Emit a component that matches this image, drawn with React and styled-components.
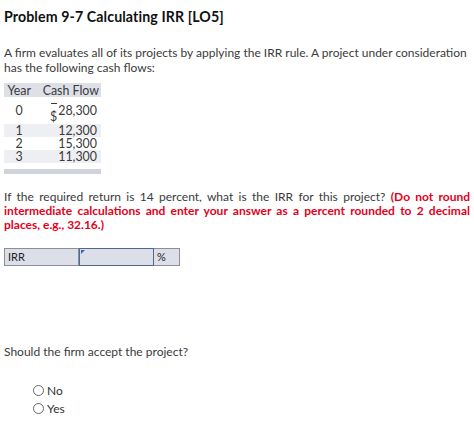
import React from "react";
import styled, { createGlobalStyle } from "styled-components";

const GlobalStyle = createGlobalStyle`
  html, body {
    margin: 0;
    padding: 0;
    background: #fff;
  }
  body {
    font-family: Lato, "Open Sans", "Liberation Sans", sans-serif;
    color: #333;
  }
`;

const Page = styled.div`
  width: 474px;
  height: 424px;
  box-sizing: border-box;
  padding: 8px 4px 0 4px;
  overflow: hidden;
`;

const Title = styled.h1`
  margin: 0;
  font-size: 14.2px;
  line-height: 18px;
  font-weight: 700;
  color: #111;
  letter-spacing: 0.1px;
`;

const Text = styled.p`
  margin: ${(p) => p.margin || "0"};
  font-size: 12px;
  line-height: ${(p) => p.lh || 14}px;
  color: #3a3a3a;
  text-align: ${(p) => (p.justify ? "justify" : "left")};
`;

const Red = styled.span`
  color: #e4001b;
  font-weight: 700;
`;

const Table = styled.table`
  margin-top: 8px;
  border-collapse: collapse;
  width: 97px;
  font-size: 12.4px;
  color: #3a3a3a;
  border-bottom: 5px solid #cfd3da;
`;

const HeadCell = styled.th`
  background: #dde0e7;
  font-weight: 400;
  padding: 0 2px;
  height: 14px;
  line-height: 13px;
  text-align: ${(p) => p.align || "center"};
`;

const Row = styled.tr`
  background: ${(p) => (p.shaded ? "#eeeff2" : "#fff")};
`;

const Cell = styled.td`
  padding: 0 4px;
  height: ${(p) => p.h || 13}px;
  line-height: 13px;
  text-align: ${(p) => p.align || "center"};
  vertical-align: middle;
`;

const Dollar = styled.span`
  position: relative;
  display: inline-block;
  top: 6px;
  margin-right: 1px;
  &::before {
    content: "";
    position: absolute;
    left: 1px;
    top: -7px;
    width: 6px;
    border-top: 1px solid #3a3a3a;
  }
`;

const Spacer = styled.tr`
  height: 8px;
`;

const AnswerRow = styled.div`
  margin-top: 16px;
  display: flex;
  height: 18px;
  font-size: 11px;
  color: #222;
`;

const Label = styled.div`
  width: ${(p) => p.w}px;
  box-sizing: border-box;
  background: #dcdfe8;
  border: 1px solid #8a8f99;
  ${(p) => (p.noLeft ? "border-left: none;" : "")}
  padding: 2px 3px;
  line-height: 12px;
`;

const Input = styled.div`
  position: relative;
  width: 75px;
  box-sizing: border-box;
  background: #dcdfe8;
  border: 1px solid #4c6a8e;
  &::before {
    content: "";
    position: absolute;
    left: 1px;
    top: 1px;
    border-top: 4px solid #2f66b0;
    border-right: 4px solid transparent;
  }
`;

const Choices = styled.div`
  margin: 25px 0 0 29px;
  display: flex;
  flex-direction: column;
  gap: 4px;
`;

const Choice = styled.label`
  display: flex;
  align-items: center;
  gap: 3px;
  font-size: 12px;
  color: #333;
  line-height: 14px;
`;

const Radio = styled.span`
  width: 9px;
  height: 9px;
  border-radius: 50%;
  border: 1px solid #666;
  background: #fff;
`;

export default function App() {
  return (
    <>
      <GlobalStyle />
      <Page>
        <Title>Problem 9-7 Calculating IRR [LO5]</Title>
        <Text margin="19px 0 0 0" lh={15}>
          A firm evaluates all of its projects by applying the IRR rule. A project under consideration
          has the following cash flows:
        </Text>
        <Table>
          <thead>
            <tr>
              <HeadCell>Year</HeadCell>
              <HeadCell align="right">Cash Flow</HeadCell>
            </tr>
          </thead>
          <tbody>
            <Row>
              <Cell h={27}>0</Cell>
              <Cell h={27} align="right">
                <Dollar>$</Dollar>28,300
              </Cell>
            </Row>
            <Row shaded>
              <Cell>1</Cell>
              <Cell align="right">12,300</Cell>
            </Row>
            <Row>
              <Cell>2</Cell>
              <Cell align="right">15,300</Cell>
            </Row>
            <Row shaded>
              <Cell>3</Cell>
              <Cell align="right">11,300</Cell>
            </Row>
            <Spacer />
          </tbody>
        </Table>
        <Text margin="16px 0 0 0" justify>
          If the required return is 14 percent, what is the IRR for this project?{" "}
          <Red>
            (Do not round intermediate calculations and enter your answer as a percent rounded to 2
            decimal places, e.g., 32.16.)
          </Red>
        </Text>
        <AnswerRow>
          <Label w={75}>IRR</Label>
          <Input />
          <Label w={26} noLeft>%</Label>
        </AnswerRow>
        <Text margin="79px 0 0 0">Should the firm accept the project?</Text>
        <Choices>
          <Choice>
            <Radio />
            No
          </Choice>
          <Choice>
            <Radio />
            Yes
          </Choice>
        </Choices>
      </Page>
    </>
  );
}
